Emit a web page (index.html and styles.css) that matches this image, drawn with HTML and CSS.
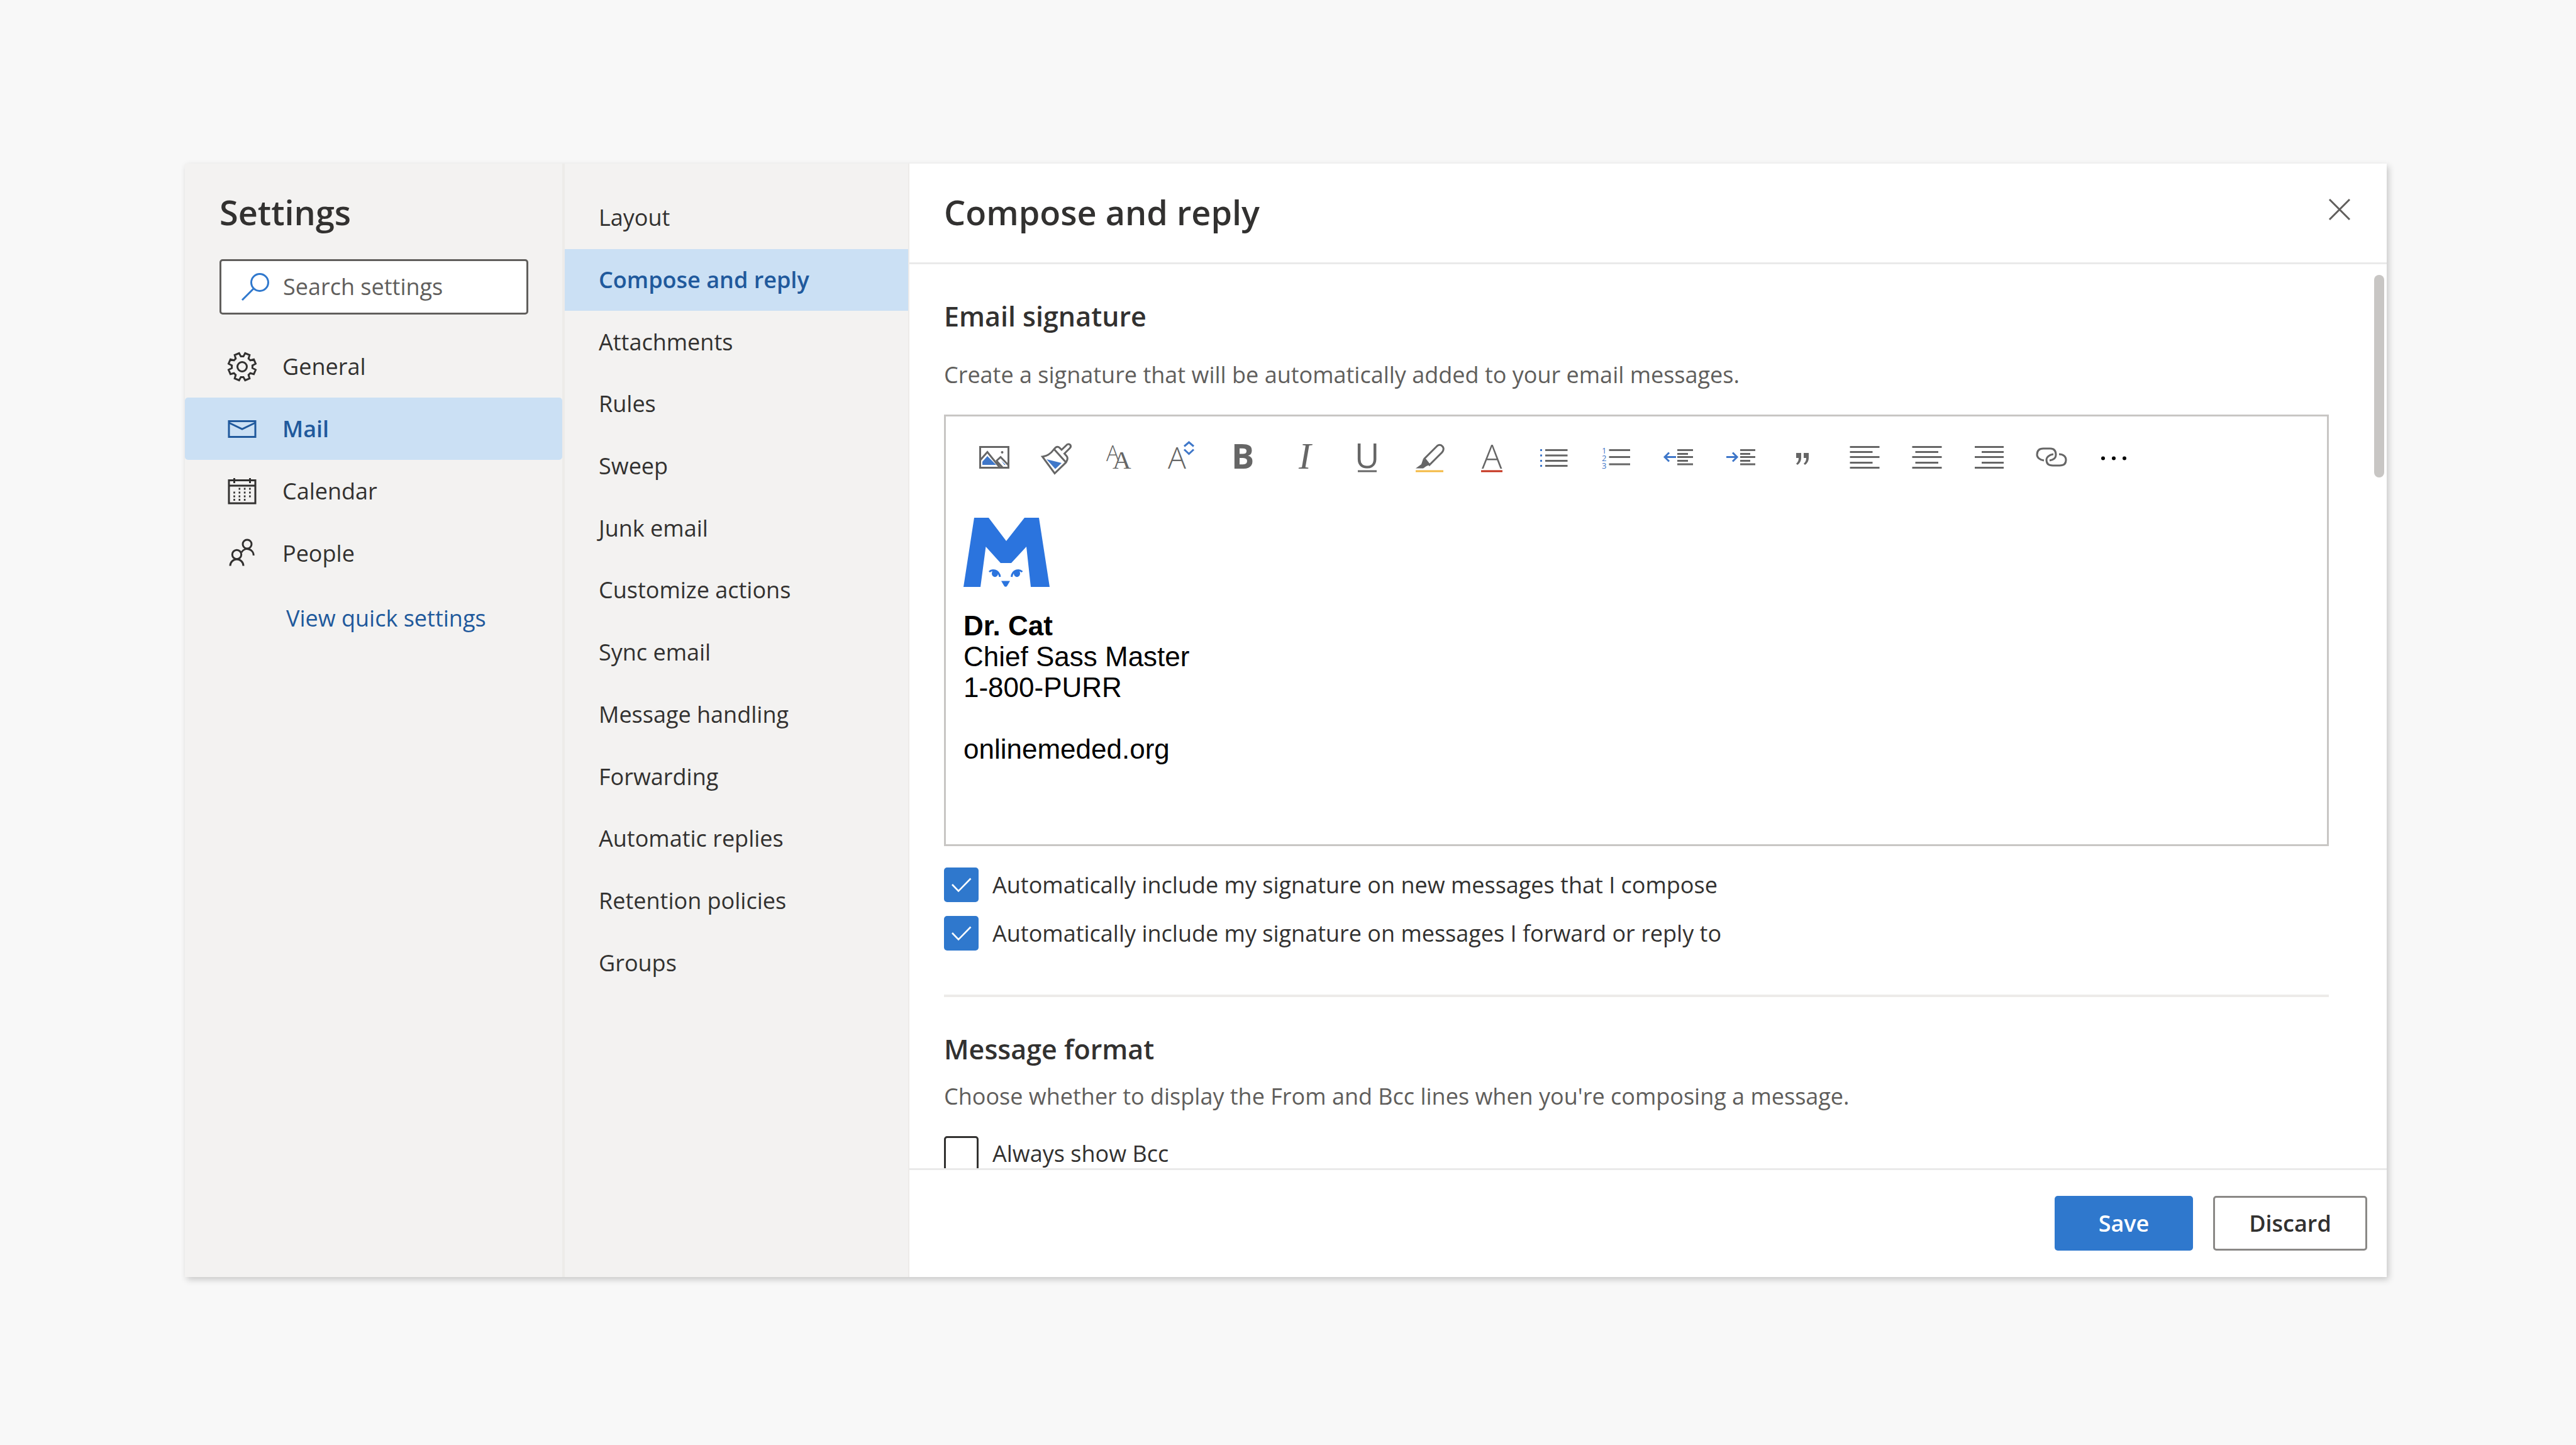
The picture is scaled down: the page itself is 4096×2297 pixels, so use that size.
FILE: index.html
```
<!DOCTYPE html>
<html lang="en">
<head>
  <meta charset="UTF-8">
  <meta name="viewport" content="width=device-width, initial-scale=1.0">
  <title>Settings - Compose and reply</title>
  <link rel="stylesheet" href="styles.css">
</head>
<body>

  <div class="settings">

    <aside class="sidebar">
      <h1>Settings</h1>

      <label class="search">
        <svg class="icon" viewBox="-24 -24 48 48">
          <circle cx="7" cy="-7" r="13.5"/>
          <path d="M-3 3L-21 21"/>
        </svg>
        <input type="text" placeholder="Search settings" aria-label="Search settings">
      </label>

      <nav class="categories">
        <a href="#general">
          <svg class="icon" viewBox="-24 -24 48 48">
            <path d="M16.4 2L21.5 4.8L18.6 11.8L13 10.2L10.2 13L11.8 18.6L4.8 21.5L2 16.4H-2L-4.8 21.5L-11.8 18.6L-10.2 13L-13 10.2L-18.6 11.8L-21.5 4.8L-16.4 2V-2L-21.5 -4.8L-18.6 -11.8L-13 -10.2L-10.2 -13L-11.8 -18.6L-4.8 -21.5L-2 -16.4H2L4.8 -21.5L11.8 -18.6L10.2 -13L13 -10.2L18.6 -11.8L21.5 -4.8L16.4 -2Z"/>
            <circle r="7.5"/>
          </svg>
          General
        </a>
        <a href="#mail" class="active">
          <svg class="icon" viewBox="-24 -24 48 48">
            <rect x="-21" y="-12.5" width="42" height="25"/>
            <path d="M-21 -10L0 0L21 -10"/>
          </svg>
          Mail
        </a>
        <a href="#calendar">
          <svg class="icon" viewBox="-24 -24 48 48">
            <rect x="-21" y="-17.5" width="42" height="36.5"/>
            <path d="M-21 -9H21M-12.5 -21V-13M12.5 -21V-13"/>
            <path d="M-5.5 -4H15M-13.8 2H15M-13.8 8H15M-13.8 13.5H7" stroke-dasharray="2.6 5.7"/>
          </svg>
          Calendar
        </a>
        <a href="#people">
          <svg class="icon" viewBox="-24 -24 48 48">
            <circle cx="8" cy="-15" r="7"/>
            <circle cx="-8.5" cy="1.5" r="7.2"/>
            <path d="M-19 19.5A10.5 10.5 0 0 1 2 19.5M-1 -2A10.3 10.3 0 0 1 18.3 3"/>
          </svg>
          People
        </a>
      </nav>

      <a href="#quick" class="quick">View quick settings</a>
    </aside>

    <nav class="sections">
      <a href="#layout">Layout</a>
      <a href="#compose" class="active">Compose and reply</a>
      <a href="#attachments">Attachments</a>
      <a href="#rules">Rules</a>
      <a href="#sweep">Sweep</a>
      <a href="#junk">Junk email</a>
      <a href="#actions">Customize actions</a>
      <a href="#sync">Sync email</a>
      <a href="#handling">Message handling</a>
      <a href="#forwarding">Forwarding</a>
      <a href="#replies">Automatic replies</a>
      <a href="#retention">Retention policies</a>
      <a href="#groups">Groups</a>
    </nav>

    <main class="panel">
      <header class="panel-header">
        <h2>Compose and reply</h2>
        <button type="button" class="close" aria-label="Close">
          <svg viewBox="-32 -32 64 64"><path d="M-16 -16L16 16M16 -16L-16 16"/></svg>
        </button>
      </header>

      <div class="panel-body">
        <h3>Email signature</h3>
        <p class="hint">Create a signature that will be automatically added to your email messages.</p>

        <div class="editor">
          <div class="toolbar">
            <button type="button" aria-label="Insert picture">
              <svg viewBox="-40 -40 80 80">
                <rect x="-22.5" y="-16.5" width="45" height="33"/>
                <path d="M-22 4L-11 -8.5L9 16.5M3 6L10 -0.5L22 12M4 6L13 16"/>
                <path class="fill-blue" d="M-19 12V7L-11 -2L3 12ZM11 5L18 12H16Z"/>
                <circle class="fill" cx="12.5" cy="-8" r="2"/>
              </svg>
            </button>
            <button type="button" aria-label="Format painter">
              <svg viewBox="-40 -40 80 80">
                <path d="M-22.5 -1C-14 -2 -9 -6 -4 -13L-1 -16Q2 -18 5 -15L8 -12L17 -20.5Q20 -22 22 -19.5Q23.5 -17 21 -14.5L12.5 -6L16 -2Q18 0 17 4L15 8L-3 25.5Z"/>
                <path d="M-4 -13L15 8"/>
                <path class="fill-blue" d="M-16 3L8 9L-2 18.5Z"/>
              </svg>
            </button>
            <button type="button" aria-label="Font">
              <svg viewBox="-40 -40 80 80">
                <text class="thin" x="-20" y="6" font-size="34">A</text>
                <text class="serif" x="-10" y="18" font-size="41">A</text>
              </svg>
            </button>
            <button type="button" aria-label="Font size">
              <svg viewBox="-40 -40 80 80">
                <text class="thin" x="-21" y="18" font-size="48">A</text>
                <path class="blue" d="M5 -17.5L12.5 -24L20 -17.5M5 -12.5L12.5 -5.5L20 -12.5"/>
              </svg>
            </button>
            <button type="button" aria-label="Bold">
              <svg viewBox="-40 -40 80 80"><text class="bold" x="-19" y="18" font-size="54">B</text></svg>
            </button>
            <button type="button" aria-label="Italic">
              <svg viewBox="-40 -40 80 80"><text class="italic" x="-11" y="18" font-size="59">I</text></svg>
            </button>
            <button type="button" aria-label="Underline">
              <svg viewBox="-40 -40 80 80">
                <text x="-20" y="17" font-size="54">U</text>
                <path d="M-15 22H15"/>
              </svg>
            </button>
            <button type="button" aria-label="Highlight">
              <svg viewBox="-40 -40 80 80">
                <path d="M-8 2L12 -18Q17 -22 21 -17Q24 -13 20 -8L0 12Z"/>
                <path class="fill" d="M-10 2L0 12L-5 14L-10 17.5H-22L-13 11Z"/>
                <path stroke="#f4b942" d="M-22 22H22"/>
              </svg>
            </button>
            <button type="button" aria-label="Font color">
              <svg viewBox="-40 -40 80 80">
                <text class="thin" x="-16" y="18" font-size="54">A</text>
                <path stroke="#c4331d" d="M-17 22H17"/>
              </svg>
            </button>
            <button type="button" aria-label="Bullets">
              <svg viewBox="-40 -40 80 80">
                <path d="M-14 -11.5H21.5M-14 -3H21.5M-14 5.5H21.5M-14 13.5H21.5"/>
                <path class="blue" d="M-22 -11.5H-19M-22 -3H-19M-22 5.5H-19M-22 13.5H-19"/>
              </svg>
            </button>
            <button type="button" aria-label="Numbering">
              <svg viewBox="-40 -40 80 80">
                <path d="M-11.5 -11.5H22M-11.5 -0.5H22M-11.5 11H22"/>
                <text class="digit" x="-23" y="-6" font-size="13">1</text>
                <text class="digit" x="-23" y="6" font-size="13">2</text>
                <text class="digit" x="-23" y="18" font-size="13">3</text>
              </svg>
            </button>
            <button type="button" aria-label="Decrease indent">
              <svg viewBox="-40 -40 80 80">
                <path d="M-2 -11.5H23M-2 -5.5H15M-2 -0.5H23M-2 5.5H15M-2 11H23"/>
                <path class="blue" d="M-4 -0.5H-22M-15 -7.5L-22 -0.5L-15 6.5"/>
              </svg>
            </button>
            <button type="button" aria-label="Increase indent">
              <svg viewBox="-40 -40 80 80">
                <path d="M-1 -11.5H23M-1 -5.5H15M-1 -0.5H23M-1 5.5H15M-1 11H23"/>
                <path class="blue" d="M-23 -0.5H-5M-13 -7.5L-6 -0.5L-13 6.5"/>
              </svg>
            </button>
            <button type="button" aria-label="Quote">
              <svg viewBox="-40 -40 80 80">
                <path class="fill" d="M-10 -7H-2V1Q-2 8 -8 12L-10 10Q-6 7 -6 1H-10ZM2 -7H10V1Q10 8 4 12L2 10Q6 7 6 1H2Z"/>
              </svg>
            </button>
            <button type="button" aria-label="Align left">
              <svg viewBox="-40 -40 80 80"><path d="M-23.5 -16.5H23.5M-23.5 -8.5H12.5M-23.5 -0.5H23.5M-23.5 8.5H12.5M-23.5 16.5H23.5"/></svg>
            </button>
            <button type="button" aria-label="Align center">
              <svg viewBox="-40 -40 80 80"><path d="M-23.5 -16.5H23.5M-18.5 -8.5H18M-23.5 -0.5H23.5M-18.5 8.5H18M-23.5 16.5H23.5"/></svg>
            </button>
            <button type="button" aria-label="Align right">
              <svg viewBox="-40 -40 80 80"><path d="M-23 -16.5H23M-12 -8.5H23M-23 -0.5H23M-12 8.5H23M-23 16.5H23"/></svg>
            </button>
            <button type="button" aria-label="Insert link">
              <svg viewBox="-40 -40 80 80">
                <path d="M-12 5C-19 4 -23 0 -23 -4Q-23 -14 -13 -14H-2Q7 -14 7 -4C7 1 3 4 -3 5"/>
                <path d="M3 -5C-4 -4 -8 0 -8 4Q-8 13 2 13H13Q23 13 23 4C23 -1 19 -5 12 -5"/>
              </svg>
            </button>
            <button type="button" aria-label="More options">
              <svg viewBox="-40 -40 80 80"><path class="dots" d="M-17 1.5H-17M0 1.5H0M17 1.5H17"/></svg>
            </button>
          </div>

          <div class="signature" contenteditable="true">
            <svg class="logo" viewBox="0 0 137 110" role="img" aria-label="Cat logo">
              <path d="M17 0H40L68 37L97 0H120L137 110H107L100 46L76 72H59L35.5 46L27 110H0Z"/>
              <ellipse cx="50" cy="88.5" rx="5" ry="5.8"/>
              <ellipse cx="85" cy="88.5" rx="5" ry="5.8"/>
              <path class="brow" d="M41 86C45 82 56 82 58 94M93.5 86C89 82 78 82 76.5 94"/>
              <path d="M60 100.5H74L69 109Q67 110.5 65 109Z"/>
            </svg>
            <strong>Dr. Cat</strong><br>
            Chief Sass Master<br>
            1-800-PURR<br>
            <br>
            onlinemeded.org
          </div>
        </div>

        <div class="options">
          <label><input type="checkbox" checked> Automatically include my signature on new messages that I compose</label>
          <label><input type="checkbox" checked> Automatically include my signature on messages I forward or reply to</label>
        </div>

        <hr>

        <h3>Message format</h3>
        <p class="hint format-hint">Choose whether to display the From and Bcc lines when you're composing a message.</p>

        <div class="options">
          <label><input type="checkbox"> Always show Bcc</label>
        </div>

        <div class="scrollbar"></div>
      </div>

      <footer class="panel-footer">
        <button type="button" class="save">Save</button>
        <button type="button" class="discard">Discard</button>
      </footer>
    </main>

  </div>

</body>
</html>
```
FILE: styles.css
```
* {
  box-sizing: border-box;
}

body {
  margin: 0;
  height: 100vh;
  padding: 260px 301px 267px 294px;
  display: flex;
  background-color: #f8f8f8;
  color: #323130;
  font-family: "Open Sans", "Noto Sans", sans-serif;
  font-size: 36px;
  line-height: 48px;
}

h1, h2, h3, p {
  margin: 0;
}

h1, h2 {
  font-size: 54px;
  line-height: 72px;
  font-weight: 600;
}

h3 {
  font-size: 43px;
  line-height: 60px;
  font-weight: 600;
}

a {
  color: inherit;
  text-decoration: none;
}

button, input {
  font: inherit;
  color: inherit;
}

button {
  padding: 0;
  border: none;
  background: none;
}

svg {
  display: block;
  fill: none;
  stroke: currentColor;
  stroke-width: 3;
}

.icon {
  width: 48px;
  height: 48px;
  flex: none;
}

.settings {
  flex: 1;
  display: flex;
  background-color: #fff;
  box-shadow: 3px 4px 10px rgba(0, 0, 0, 0.2);
}

/* left column */
.sidebar {
  width: 604px;
  flex: none;
  padding-top: 41px;
  background-color: #f3f2f1;
  border-right: 4px solid #edebe9;
}

.sidebar h1 {
  padding-left: 55px;
}

.search {
  display: flex;
  align-items: center;
  height: 88px;
  margin: 39px 54px 33px 55px;
  padding-left: 30px;
  gap: 20px;
  background-color: #fff;
  border: 3px solid #605e5c;
  border-radius: 5px;
}

.search .icon {
  color: #2f78cd;
}

.search input {
  flex: 1;
  min-width: 0;
  padding: 0;
  border: none;
  outline: none;
  background: none;
}

.search input::placeholder {
  color: #605e5c;
  opacity: 1;
}

.categories a {
  display: flex;
  align-items: center;
  gap: 40px;
  height: 99px;
  padding-left: 67px;
  border-radius: 5px;
}

.categories .active,
.sections .active {
  background-color: #cbe0f4;
  color: #20599c;
  font-weight: 600;
}

.quick {
  display: inline-block;
  margin: 30px 0 0 161px;
  color: #20599c;
}

/* second column */
.sections {
  width: 548px;
  flex: none;
  display: grid;
  grid-template-rows: repeat(13, 1fr);
  padding: 37px 0 450px;
  background-color: #f3f2f1;
  border-right: 2px solid #edebe9;
}

.sections a {
  display: flex;
  align-items: center;
  padding-left: 54px;
}

/* main panel */
.panel {
  flex: 1;
  min-width: 0;
  display: flex;
  flex-direction: column;
}

.panel-header {
  display: flex;
  justify-content: space-between;
  align-items: flex-start;
  height: 160px;
  flex: none;
  padding: 41px 43px 0 55px;
  border-bottom: 3px solid #eaeaea;
}

.close svg {
  width: 64px;
  height: 64px;
  color: #605e5c;
}

.panel-body {
  flex: 1;
  min-height: 0;
  position: relative;
  overflow: hidden;
  padding: 53px 92px 0 55px;
}

.hint {
  margin: 39px 0;
  color: #605e5c;
}

.format-hint {
  margin-top: 21px;
}

.editor {
  height: 686px;
  margin-bottom: 34px;
  border: 3px solid #c8c6c4;
}

.toolbar {
  display: grid;
  grid-template-columns: repeat(19, 1fr);
  width: 1878px;
  margin-left: 28px;
  padding-top: 25px;
  color: #666;
}

.toolbar svg {
  width: 80px;
  height: 80px;
  margin: 0 auto;
}

.toolbar text {
  fill: #666;
  stroke: none;
}

.toolbar .thin {
  font-weight: 300;
}

.toolbar .bold {
  font-weight: 700;
}

.toolbar .serif,
.toolbar .italic {
  font-family: "Liberation Serif", serif;
}

.toolbar .italic {
  font-style: italic;
}

.toolbar .digit {
  fill: #3f77c9;
}

.toolbar .fill {
  fill: #666;
  stroke: none;
}

.toolbar .fill-blue {
  fill: #3f77c9;
  stroke: none;
}

.toolbar .blue {
  stroke: #3f77c9;
}

.toolbar .dots {
  stroke: #000;
  stroke-width: 6;
  stroke-linecap: round;
}

.signature {
  padding: 56px 28px 0;
  color: #000;
  font-family: "Liberation Sans", Arial, sans-serif;
  font-size: 44px;
  line-height: 49px;
}

.logo {
  width: 137px;
  height: 110px;
  margin-bottom: 37px;
  fill: #2b74de;
  stroke: none;
}

.logo .brow {
  fill: none;
  stroke: #2b74de;
  stroke-width: 3;
}

.options {
  display: flex;
  flex-direction: column;
  gap: 22px;
}

.options label {
  display: flex;
  align-items: center;
  gap: 22px;
  height: 55px;
}

.options input {
  appearance: none;
  width: 55px;
  height: 55px;
  margin: 0;
  border: 3px solid #323130;
  border-radius: 5px;
}

.options input:checked {
  border: none;
  background: #2f78cd url("data:image/svg+xml,%3Csvg xmlns='http://www.w3.org/2000/svg' viewBox='0 0 55 55'%3E%3Cpath d='M13 27L23 37.5L42.5 17.5' fill='none' stroke='white' stroke-width='2.6'/%3E%3C/svg%3E");
}

hr {
  height: 4px;
  margin: 70px 0 53px;
  border: none;
  background-color: #edebe9;
}

.scrollbar {
  position: absolute;
  top: 17px;
  right: 4px;
  width: 16px;
  height: 322px;
  border-radius: 8px;
  background-color: #c8c6c4;
}

.panel-footer {
  display: flex;
  justify-content: flex-end;
  gap: 32px;
  height: 173px;
  flex: none;
  padding: 41px 31px 0;
  border-top: 3px solid #eaeaea;
}

.panel-footer button {
  height: 87px;
  border-radius: 5px;
  font-weight: 600;
}

.save {
  width: 220px;
  background-color: #2f78cd;
  color: #fff;
}

.discard {
  width: 245px;
  border: 3px solid #8a8886;
}
```
